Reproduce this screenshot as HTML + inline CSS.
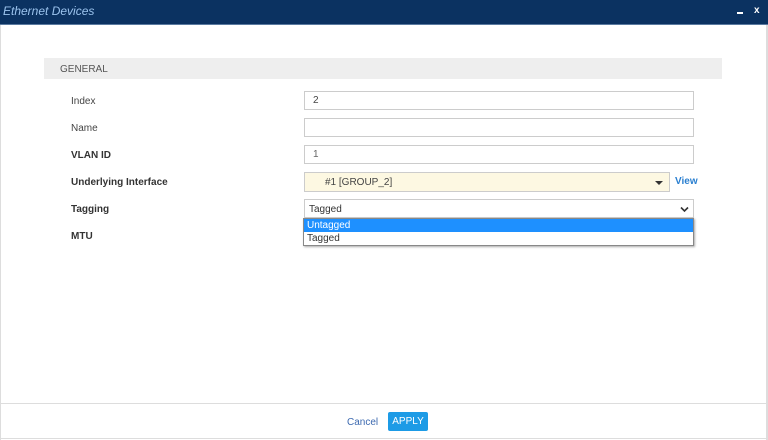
<!DOCTYPE html>
<html><head><style>
body{margin:0;width:768px;height:440px;overflow:hidden;background:#fff;font-family:"Liberation Sans",sans-serif;position:relative}
.a{position:absolute}
.t{height:24px;width:768px;background:#0b3261;border-bottom:1px solid #5a7aa0;top:0;left:0}
.lbl{font-size:10px;color:#444;left:71px}
.b{font-weight:bold;color:#333}
.in{left:304px;width:388px;height:17px;border:1px solid #ccc;font-size:10px;color:#444;line-height:18px;box-sizing:content-box;text-indent:8px}
</style></head><body>
<div class="a t"></div>
<div class="a" style="left:3px;top:4px;color:#9cc4ee;font-style:italic;font-size:12px">Ethernet Devices</div>
<div class="a" style="left:737px;top:12px;width:6px;height:2px;background:#fff"></div>
<div class="a" style="left:754px;top:5px;color:#fff;font-size:10px;font-weight:bold">x</div>
<div class="a" style="left:766px;top:25px;width:2px;height:415px;background:#ddd"></div>
<div class="a" style="left:0;top:25px;width:1px;height:415px;background:#ddd"></div>
<div class="a" style="left:44px;top:58px;width:678px;height:21px;background:#eee"></div>
<div class="a" style="left:60px;top:64px;font-size:10px;color:#555">GENERAL</div>
<div class="a lbl" style="top:96px">Index</div>
<div class="a lbl" style="top:123px">Name</div>
<div class="a lbl b" style="top:150px">VLAN ID</div>
<div class="a lbl b" style="top:177px">Underlying Interface</div>
<div class="a lbl b" style="top:204px">Tagging</div>
<div class="a lbl b" style="top:231px">MTU</div>
<div class="a in" style="top:91px">2</div>
<div class="a in" style="top:118px"></div>
<div class="a in" style="top:145px;color:#666">1</div>
<div class="a in" style="top:172px;width:364px;background:#fdf8e2;height:18px;line-height:19px;text-indent:20px">#1 [GROUP_2]<span class="a" style="right:6px;top:8px;width:0;height:0;border-left:4px solid transparent;border-right:4px solid transparent;border-top:4px solid #333"></span></div>
<div class="a" style="left:675px;top:176px;font-size:10px;font-weight:bold;color:#2a7fd0">View</div>
<div class="a in" style="top:199px;text-indent:4px;color:#333;line-height:19px">Tagged<svg class="a" style="right:4px;top:6px" width="9" height="7" viewBox="0 0 9 7"><path d="M1 1.5L4.5 5L8 1.5" stroke="#333" stroke-width="1.6" fill="none"/></svg></div>
<div class="a" style="left:303px;top:218px;width:389px;height:26px;border:1px solid #888;background:#fff;box-shadow:1px 1px 2px #aaa"></div>
<div class="a" style="left:304px;top:219px;width:389px;height:13px;background:#1e90ff;color:#fff;font-size:10px;line-height:14px;text-indent:3px">Untagged</div>
<div class="a" style="left:304px;top:232px;font-size:10px;color:#333;text-indent:3px;line-height:14px">Tagged</div>
<div class="a" style="left:0;top:403px;width:768px;height:1px;background:#ddd"></div>
<div class="a" style="left:0;top:438px;width:768px;height:1px;background:#ddd"></div>
<div class="a" style="left:347px;top:417px;font-size:10px;color:#3d6ab0">Cancel</div>
<div class="a" style="left:388px;top:412px;width:40px;height:19px;background:#1d9be6;border-radius:2px;color:#fff;font-size:10px;line-height:20px;text-align:center">APPLY</div>
</body></html>
